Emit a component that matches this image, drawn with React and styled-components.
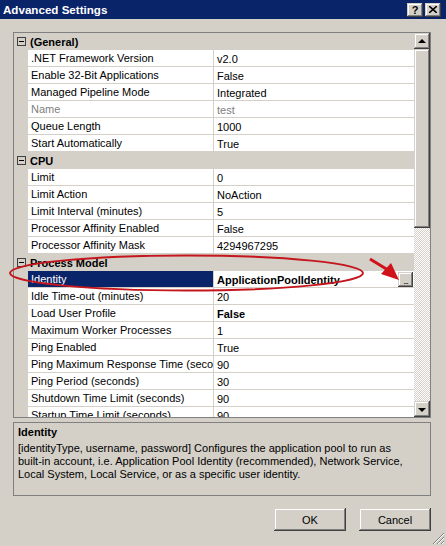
import React from "react";
import styled, { createGlobalStyle, css } from "styled-components";

const GlobalStyle = createGlobalStyle`
  html, body {
    margin: 0;
    padding: 0;
    background: #d4d0c8;
  }
  body {
    font-family: "Liberation Sans", Arial, sans-serif;
    font-size: 11px;
    color: #000;
  }
`;

// classic raised 3D edge
const raised = css`
  background: #d4d0c8;
  box-shadow: inset -1px -1px #404040, inset 1px 1px #d4d0c8,
    inset -2px -2px #808080, inset 2px 2px #ffffff;
`;

const Window = styled.div`
  position: relative;
  width: 446px;
  height: 546px;
  display: flex;
  flex-direction: column;
  background: #d4d0c8;
  overflow: hidden;
`;

const TitleBar = styled.div`
  height: 19px;
  flex-shrink: 0;
  display: flex;
  align-items: center;
  justify-content: space-between;
  padding: 0 5px 0 3px;
  background: #0a246a;
  color: #fff;
  font-weight: bold;
  font-size: 11.6px;
`;

const TitleButtons = styled.div`
  display: flex;
  gap: 2px;
`;

const CaptionButton = styled.div`
  ${raised};
  width: 16px;
  height: 14px;
  display: flex;
  align-items: center;
  justify-content: center;
  color: #000;
  font-weight: bold;
  font-size: 11px;
  line-height: 14px;
`;

const Body = styled.div`
  flex: 1;
  display: flex;
  flex-direction: column;
  padding: 13px 15px 0 13px;
`;

const Grid = styled.div`
  height: 386px;
  display: flex;
  border: 1px solid #808080;
  background: #fff;
  box-sizing: border-box;
`;

const Rows = styled.div`
  width: 400px;
  overflow: hidden;
`;

const Row = styled.div`
  display: grid;
  grid-template-columns: 14px 186px 200px;
  height: 17px;
  box-sizing: border-box;
  border-bottom: 1px solid #d4d0c8;
  line-height: 15px;
  white-space: nowrap;
`;

const Gutter = styled.div`
  background: #d4d0c8;
`;

const NameCell = styled.div`
  padding: 1px 0 0 3px;
  overflow: hidden;
  text-overflow: clip;
  border-right: 1px solid #d4d0c8;
  background: ${(p) => (p.$selected ? "#0a246a" : "#fff")};
  color: ${(p) => (p.$selected ? "#fff" : p.$disabled ? "#808080" : "#000")};
`;

const ValueCell = styled.div`
  display: flex;
  align-items: center;
  justify-content: space-between;
  padding: 2px 1px 0 3px;
  overflow: hidden;
  font-weight: ${(p) => (p.$bold ? "bold" : "normal")};
  color: ${(p) => (p.$disabled ? "#808080" : "#000")};
`;

const CategoryRow = styled.div`
  display: flex;
  align-items: center;
  height: 17px;
  padding-top: 1px;
  box-sizing: border-box;
  background: #d4d0c8;
  font-weight: bold;
  line-height: 15px;
`;

const Expander = styled.div`
  width: 7px;
  height: 7px;
  margin: -1px 4px 0 3px;
  border: 1px solid #404040;
  display: flex;
  align-items: center;
  justify-content: center;

  &::after {
    content: "";
    width: 5px;
    height: 1px;
    background: #000;
  }
`;

const EllipsisButton = styled.div`
  ${raised};
  width: 15px;
  height: 15px;
  margin-top: -1px;
  display: flex;
  align-items: flex-end;
  justify-content: center;
  font-weight: normal;
  font-size: 9px;
  line-height: 11px;
  letter-spacing: -1px;
`;

const ScrollBar = styled.div`
  width: 16px;
  display: flex;
  flex-direction: column;
`;

const ArrowButton = styled.div`
  ${raised};
  height: 16px;
  flex-shrink: 0;
  display: flex;
  align-items: center;
  justify-content: center;

  &::after {
    content: "";
    border-left: 4px solid transparent;
    border-right: 4px solid transparent;
    ${(p) =>
      p.$down
        ? "border-top: 4px solid #000; margin-top: 1px;"
        : "border-bottom: 4px solid #000; margin-top: -1px;"}
  }
`;

const Thumb = styled.div`
  ${raised};
  height: 179px;
  flex-shrink: 0;
`;

const Track = styled.div`
  flex: 1;
  background-color: #fff;
  background-image: repeating-conic-gradient(#d4d0c8 0% 25%, #fff 0% 50%);
  background-size: 2px 2px;
`;

const Description = styled.div`
  margin-top: 4px;
  height: 74px;
  box-sizing: border-box;
  border: 1px solid #808080;
  padding: 3px 4px 0 4px;
  line-height: 13px;
`;

const DescTitle = styled.div`
  font-weight: bold;
  margin-bottom: 3px;
`;

const Footer = styled.div`
  display: flex;
  justify-content: flex-end;
  gap: 13px;
  margin-top: 12px;
`;

const DialogButton = styled.div`
  ${raised};
  width: 72px;
  height: 23px;
  display: flex;
  align-items: center;
  justify-content: center;
`;

const Overlay = styled.svg`
  position: absolute;
  left: 0;
  top: 0;
  pointer-events: none;
`;

const Grip = styled.svg`
  position: absolute;
  right: 1px;
  bottom: 1px;
`;

const categories = [
  {
    name: "(General)",
    items: [
      { name: ".NET Framework Version", value: "v2.0" },
      { name: "Enable 32-Bit Applications", value: "False" },
      { name: "Managed Pipeline Mode", value: "Integrated" },
      { name: "Name", value: "test", disabled: true },
      { name: "Queue Length", value: "1000" },
      { name: "Start Automatically", value: "True" },
    ],
  },
  {
    name: "CPU",
    items: [
      { name: "Limit", value: "0" },
      { name: "Limit Action", value: "NoAction" },
      { name: "Limit Interval (minutes)", value: "5" },
      { name: "Processor Affinity Enabled", value: "False" },
      { name: "Processor Affinity Mask", value: "4294967295" },
    ],
  },
  {
    name: "Process Model",
    items: [
      { name: "Identity", value: "ApplicationPoolIdentity", bold: true, selected: true, browse: true },
      { name: "Idle Time-out (minutes)", value: "20" },
      { name: "Load User Profile", value: "False", bold: true },
      { name: "Maximum Worker Processes", value: "1" },
      { name: "Ping Enabled", value: "True" },
      { name: "Ping Maximum Response Time (seconds)", value: "90" },
      { name: "Ping Period (seconds)", value: "30" },
      { name: "Shutdown Time Limit (seconds)", value: "90" },
      { name: "Startup Time Limit (seconds)", value: "90" },
    ],
  },
];

const App = () => {
  return (
    <Window>
      <GlobalStyle />
      <TitleBar>
        <span>Advanced Settings</span>
        <TitleButtons>
          <CaptionButton>?</CaptionButton>
          <CaptionButton>
            <svg width="8" height="7" viewBox="0 0 8 7">
              <path d="M0 0 L8 7 M8 0 L0 7" stroke="#000" strokeWidth="1.6" />
            </svg>
          </CaptionButton>
        </TitleButtons>
      </TitleBar>

      <Body>
        <Grid>
          <Rows>
            {categories.map((cat) => (
              <React.Fragment key={cat.name}>
                <CategoryRow>
                  <Expander />
                  {cat.name}
                </CategoryRow>
                {cat.items.map((item) => (
                  <Row key={item.name}>
                    <Gutter />
                    <NameCell $selected={item.selected} $disabled={item.disabled}>
                      {item.name}
                    </NameCell>
                    <ValueCell $bold={item.bold} $disabled={item.disabled}>
                      <span>{item.value}</span>
                      {item.browse && <EllipsisButton>...</EllipsisButton>}
                    </ValueCell>
                  </Row>
                ))}
              </React.Fragment>
            ))}
          </Rows>
          <ScrollBar>
            <ArrowButton />
            <Thumb />
            <Track />
            <ArrowButton $down />
          </ScrollBar>
        </Grid>

        <Description>
          <DescTitle>Identity</DescTitle>
          [identityType, username, password] Configures the application pool to run as
          <br />
          built-in account, i.e. Application Pool Identity (recommended), Network Service,
          <br />
          Local System, Local Service, or as a specific user identity.
        </Description>

        <Footer>
          <DialogButton>OK</DialogButton>
          <DialogButton>Cancel</DialogButton>
        </Footer>
      </Body>

      {/* red annotation drawn over the dialog */}
      <Overlay width="446" height="546">
        <ellipse cx="186.5" cy="273" rx="176.5" ry="17.5" fill="none" stroke="#c4161c" strokeWidth="2" />
        <line x1="370" y1="259" x2="388" y2="270" stroke="#d0121b" strokeWidth="3" />
        <polygon points="399,280 381,274 391,263" fill="#d0121b" />
      </Overlay>

      <Grip width="13" height="13" viewBox="0 0 13 13">
        <path d="M12 1 L1 12 M12 5 L5 12 M12 9 L9 12" stroke="#808080" strokeWidth="1" />
        <path d="M12 2 L2 12 M12 6 L6 12 M12 10 L10 12" stroke="#fff" strokeWidth="1" />
      </Grip>
    </Window>
  );
};

export default App;
